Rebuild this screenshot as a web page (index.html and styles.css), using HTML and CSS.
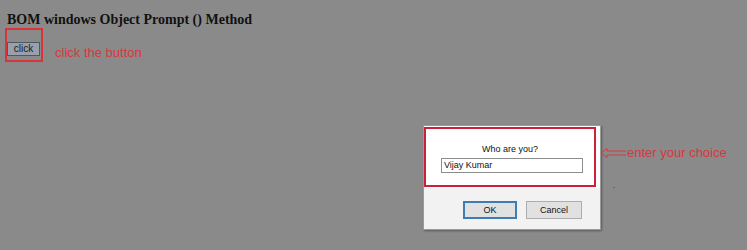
FILE: index.html
```html
<!DOCTYPE html>
<html>
<head>
<meta charset="utf-8">
<link rel="stylesheet" href="styles.css">
</head>
<body>
<div class="page">
  <h3 class="title">BOM windows Object Prompt () Method</h3>
  <div class="row">
    <div class="mark-box">
      <button class="click-btn">click</button>
    </div>
    <span class="note note-click">click the button</span>
  </div>

  <div class="dialog">
    <div class="dialog-body">
      <div class="mark-dialog">
        <div class="prompt">Who are you?</div>
        <div class="input">Vijay Kumar</div>
      </div>
    </div>
    <div class="dialog-foot">
      <button class="dbtn dbtn-ok">OK</button>
      <button class="dbtn">Cancel</button>
    </div>
  </div>

  <div class="callout">
    <svg class="arrow" width="27" height="12" viewBox="0 0 27 12">
      <path d="M1 6 L7 1.5 L7 4 L26 4 M1 6 L7 10.5 L7 8 L26 8" fill="none" stroke="#d03a40" stroke-width="1"/>
    </svg>
    <span class="note">enter your choice</span>
  </div>
  <span class="dot"></span>
</div>
</body>
</html>
```

FILE: styles.css
```css
html, body {
  margin: 0;
  padding: 0;
  background: #8a8a8a;
}
.page {
  position: relative;
  width: 747px;
  height: 250px;
  padding: 11px 0 0 7px;
  box-sizing: border-box;
}
.title {
  margin: 0;
  font-family: "Liberation Serif", serif;
  font-weight: bold;
  font-size: 14px;
  line-height: 17px;
  color: #111;
}
.row {
  display: flex;
  align-items: flex-end;
  margin-left: -2px;
}
.mark-box {
  width: 34px;
  height: 26px;
  border: 2px solid #d8343c;
  display: flex;
  align-items: flex-end;
  padding-bottom: 4px;
}
.click-btn {
  width: 33px;
  height: 14px;
  padding: 0;
  margin: 0;
  border: 1px solid #4f5862;
  background: #98a0ab;
  font-family: "Liberation Sans", Arial, sans-serif;
  font-size: 10px;
  line-height: 12px;
  color: #1a1a1a;
}
.note {
  font-family: "Liberation Sans", Arial, sans-serif;
  font-size: 13px;
  color: #d6383e;
  line-height: 15px;
}
.note-click {
  margin-left: 12px;
  margin-bottom: 2px;
}
.dialog {
  position: absolute;
  left: 423px;
  top: 125px;
  width: 178px;
  height: 105px;
  box-sizing: border-box;
  background: #f2f2f2;
  border: 1px solid #9a9a9a;
  box-shadow: 1px 1px 2px rgba(0,0,0,0.35);
  display: flex;
  flex-direction: column;
}
.dialog-body {
  background: #fbfbfb;
  padding: 1px 4px 1px 0;
}
.mark-dialog {
  height: 60px;
  box-sizing: border-box;
  border: 2px solid #c82239;
  background: #fff;
  display: flex;
  flex-direction: column;
  align-items: center;
  font-family: "Liberation Sans", Arial, sans-serif;
  font-size: 9px;
  color: #111;
}
.prompt {
  margin-top: 15px;
  line-height: 11px;
}
.input {
  align-self: flex-start;
  margin-left: 15px;
  margin-top: 3px;
  width: 142px;
  height: 15px;
  box-sizing: border-box;
  border: 1px solid #8d8d8d;
  background: #fff;
  padding-left: 2px;
  line-height: 13px;
}
.dialog-foot {
  display: flex;
  justify-content: flex-end;
  gap: 9px;
  padding: 13px 18px 0 0;
}
.dbtn {
  width: 56px;
  height: 18px;
  margin: 0;
  padding: 0;
  box-sizing: border-box;
  border: 1px solid #adadad;
  background: #e1e1e1;
  font-family: "Liberation Sans", Arial, sans-serif;
  font-size: 9px;
  color: #111;
}
.dbtn-ok {
  width: 54px;
  border: 2px solid #3d7db3;
}
.callout {
  position: absolute;
  left: 600px;
  top: 145px;
  display: flex;
  align-items: center;
}
.arrow {
  display: block;
}
.dot {
  position: absolute;
  left: 613px;
  top: 187px;
  width: 2px;
  height: 1px;
  background: #b04a50;
}
```
